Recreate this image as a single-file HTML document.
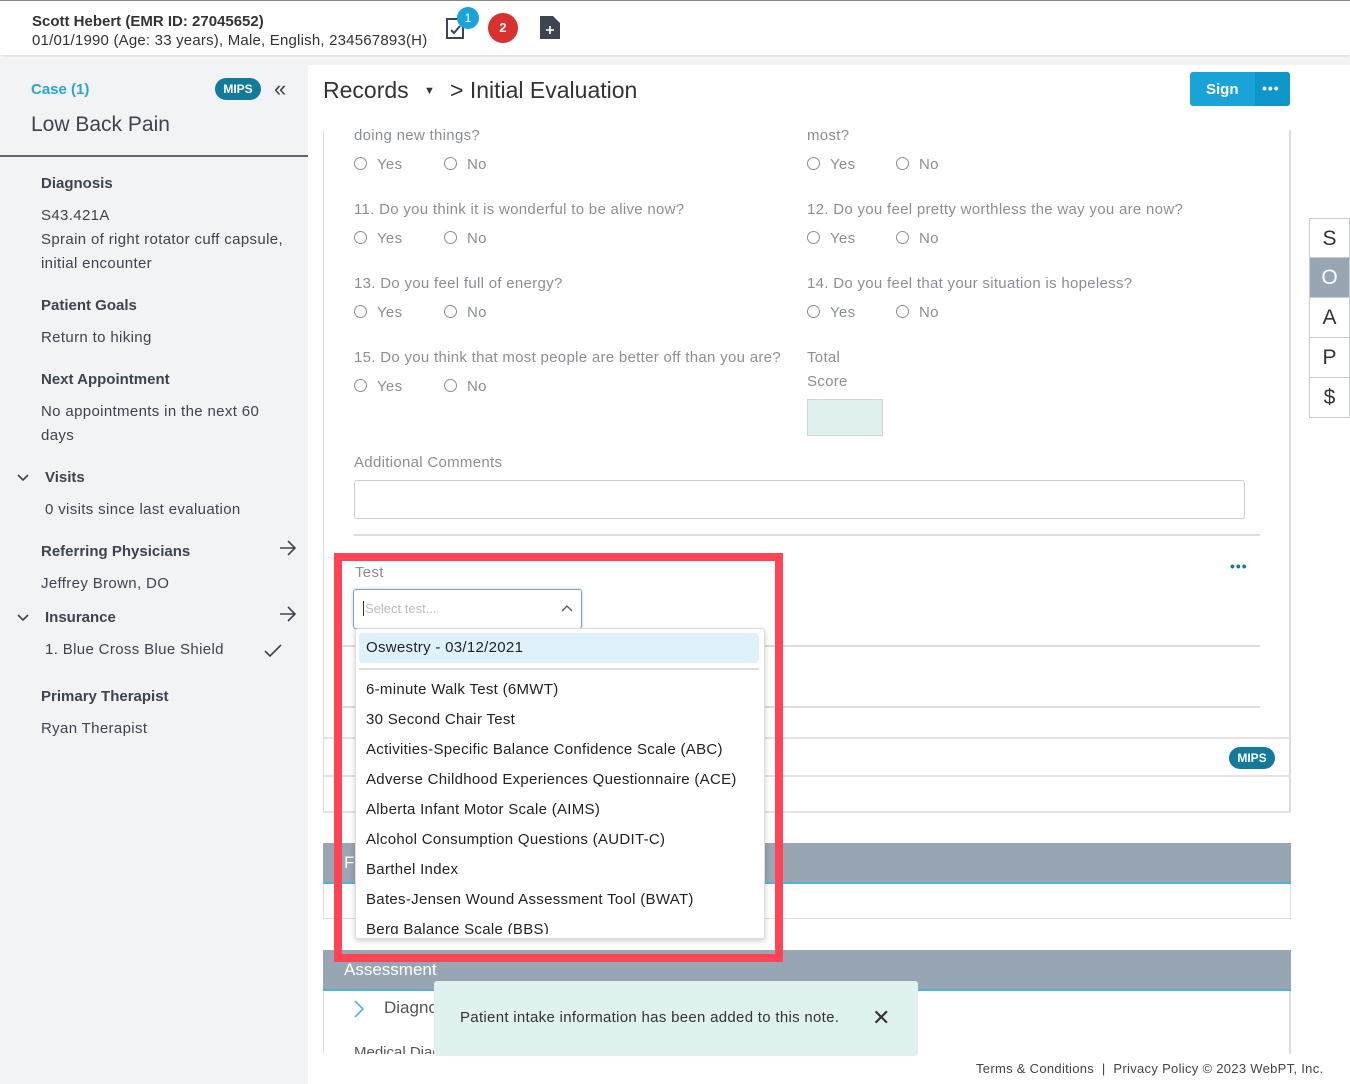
<!DOCTYPE html>
<html><head><meta charset="utf-8"><style>
*{box-sizing:border-box;margin:0;padding:0}
body{width:1350px;height:1084px;position:relative;overflow:hidden;background:#fff;font-family:"Liberation Sans",sans-serif;color:#3d4450}
.a{position:absolute;white-space:nowrap}
.q{color:#8a8f96;font-size:15px;letter-spacing:.3px}
.r{position:absolute;width:13px;height:13px;border:1px solid #8a8f96;border-radius:50%}
.sb{font-size:15px;color:#3d4450;letter-spacing:.35px}
.sh{font-size:15px;font-weight:bold;color:#3d4450}
.it{left:366px;font-size:15px;color:#222;letter-spacing:.3px}
.tab{position:absolute;left:1309px;width:41px;height:40px;border:1px solid #c8ccd0;border-top:none;font-size:21px;text-align:center;line-height:40px;color:#333}
</style></head><body>
<!-- header -->
<div class="a" style="left:0;top:0;width:1350px;height:55px;background:#fff;border-top:1px solid #888;box-shadow:0 2px 4px rgba(0,0,0,.15)"></div>
<div class="a" style="left:32px;top:13px;font-size:15px;font-weight:bold;color:#333">Scott Hebert (EMR ID: 27045652)</div>
<div class="a" style="left:32px;top:32px;font-size:15px;color:#333;letter-spacing:.2px">01/01/1990 (Age: 33 years), Male, English, 234567893(H)</div>
<svg class="a" style="left:444px;top:16px" width="24" height="26" viewBox="0 0 24 26"><path d="M3 3h12l4 4v15H3z" fill="none" stroke="#3d4450" stroke-width="2"/><path d="M7 14l3 3 6-7" fill="none" stroke="#3d4450" stroke-width="2"/></svg>
<div class="a" style="left:457px;top:7px;width:22px;height:22px;border-radius:50%;background:#1aa3d8;color:#fff;font-size:12px;text-align:center;line-height:22px">1</div>
<div class="a" style="left:488px;top:13px;width:30px;height:30px;border-radius:50%;background:#d9312f;color:#fff;font-size:13px;font-weight:bold;text-align:center;line-height:30px">2</div>
<svg class="a" style="left:539px;top:15px" width="22" height="25" viewBox="0 0 22 25"><path d="M1 1h13l7 7v16H1z" fill="#3d4450"/><path d="M11 11v8M7 15h8" stroke="#fff" stroke-width="1.6"/></svg>
<!-- sidebar -->
<div class="a" style="left:0;top:57px;width:308px;height:1027px;background:#f1f3f5"></div>
<div class="a" style="left:0;top:155px;width:308px;height:2px;background:#5d6670"></div>
<div class="a" style="left:31px;top:81px;font-size:15px;color:#2aa3d6;font-weight:bold">Case (1)</div>
<div class="a" style="left:215px;top:78px;width:46px;height:22px;border-radius:11px;background:#137a9a;color:#fff;font-size:12px;font-weight:bold;text-align:center;line-height:22px">MIPS</div>
<div class="a" style="left:274px;top:76px;font-size:22px;color:#3d4450">«</div>
<div class="a" style="left:31px;top:113px;font-size:21px;color:#3d4450">Low Back Pain</div>
<div class="a sh" style="left:41px;top:175px">Diagnosis</div>
<div class="a sb" style="left:41px;top:207px">S43.421A</div>
<div class="a sb" style="left:41px;top:231px">Sprain of right rotator cuff capsule,</div>
<div class="a sb" style="left:41px;top:255px">initial encounter</div>
<div class="a sh" style="left:41px;top:297px">Patient Goals</div>
<div class="a sb" style="left:41px;top:329px">Return to hiking</div>
<div class="a sh" style="left:41px;top:371px">Next Appointment</div>
<div class="a sb" style="left:41px;top:403px">No appointments in the next 60</div>
<div class="a sb" style="left:41px;top:427px">days</div>
<svg class="a" style="left:16px;top:473px" width="14" height="10"><path d="M2 2l5 5 5-5" fill="none" stroke="#3d4450" stroke-width="1.6"/></svg>
<div class="a sh" style="left:45px;top:469px">Visits</div>
<div class="a sb" style="left:45px;top:501px">0 visits since last evaluation</div>
<div class="a sh" style="left:41px;top:543px">Referring Physicians</div>
<svg class="a" style="left:278px;top:539px" width="20" height="18"><path d="M2 9h15M10 2l7 7-7 7" fill="none" stroke="#3d4450" stroke-width="1.6"/></svg>
<div class="a sb" style="left:41px;top:575px">Jeffrey Brown, DO</div>
<svg class="a" style="left:16px;top:613px" width="14" height="10"><path d="M2 2l5 5 5-5" fill="none" stroke="#3d4450" stroke-width="1.6"/></svg>
<div class="a sh" style="left:45px;top:609px">Insurance</div>
<svg class="a" style="left:278px;top:605px" width="20" height="18"><path d="M2 9h15M10 2l7 7-7 7" fill="none" stroke="#3d4450" stroke-width="1.6"/></svg>
<div class="a sb" style="left:45px;top:641px">1. Blue Cross Blue Shield</div>
<svg class="a" style="left:263px;top:643px" width="20" height="16"><path d="M2 8l5 5 11-11" fill="none" stroke="#3d4450" stroke-width="1.6"/></svg>
<div class="a sh" style="left:41px;top:688px">Primary Therapist</div>
<div class="a sb" style="left:41px;top:720px">Ryan Therapist</div>
<!-- main top -->
<div class="a" style="left:308px;top:57px;width:1042px;height:8px;background:#f1f3f5"></div>
<div class="a" style="left:323px;top:77px;font-size:23px;color:#333">Records</div>
<div class="a" style="left:424px;top:85px;font-size:11px;color:#333">▼</div>
<div class="a" style="left:450px;top:77px;font-size:23px;color:#333">&gt; Initial Evaluation</div>
<div class="a" style="left:1190px;top:72px;width:100px;height:34px;border-radius:3px;background:#1aa3d8"></div>
<div class="a" style="left:1255px;top:72px;width:35px;height:34px;border-radius:0 3px 3px 0;background:#0f96c9"></div>
<div class="a" style="left:1206px;top:81px;font-size:15px;font-weight:bold;color:#fff">Sign</div>
<div class="a" style="left:1262px;top:80px;font-size:14px;font-weight:bold;color:#fff;letter-spacing:1px">•••</div>
<!-- card -->
<div class="a" style="left:323px;top:130px;width:968px;height:683px;border-left:1px solid #ddd;border-right:2px solid #ddd"></div>
<div class="a q" style="left:354px;top:127px">doing new things?</div>
<div class="a q" style="left:807px;top:127px">most?</div>
<div class="r" style="left:354px;top:157px"></div><div class="a q" style="left:377px;top:156px">Yes</div>
<div class="r" style="left:444px;top:157px"></div><div class="a q" style="left:467px;top:156px">No</div>
<div class="r" style="left:807px;top:157px"></div><div class="a q" style="left:830px;top:156px">Yes</div>
<div class="r" style="left:896px;top:157px"></div><div class="a q" style="left:919px;top:156px">No</div>
<div class="a q" style="left:354px;top:201px">11. Do you think it is wonderful to be alive now?</div>
<div class="a q" style="left:807px;top:201px">12. Do you feel pretty worthless the way you are now?</div>
<div class="r" style="left:354px;top:231px"></div><div class="a q" style="left:377px;top:230px">Yes</div>
<div class="r" style="left:444px;top:231px"></div><div class="a q" style="left:467px;top:230px">No</div>
<div class="r" style="left:807px;top:231px"></div><div class="a q" style="left:830px;top:230px">Yes</div>
<div class="r" style="left:896px;top:231px"></div><div class="a q" style="left:919px;top:230px">No</div>
<div class="a q" style="left:354px;top:275px">13. Do you feel full of energy?</div>
<div class="a q" style="left:807px;top:275px">14. Do you feel that your situation is hopeless?</div>
<div class="r" style="left:354px;top:305px"></div><div class="a q" style="left:377px;top:304px">Yes</div>
<div class="r" style="left:444px;top:305px"></div><div class="a q" style="left:467px;top:304px">No</div>
<div class="r" style="left:807px;top:305px"></div><div class="a q" style="left:830px;top:304px">Yes</div>
<div class="r" style="left:896px;top:305px"></div><div class="a q" style="left:919px;top:304px">No</div>
<div class="a q" style="left:354px;top:349px">15. Do you think that most people are better off than you are?</div>
<div class="a q" style="left:807px;top:349px">Total</div>
<div class="a q" style="left:807px;top:373px">Score</div>
<div class="r" style="left:354px;top:379px"></div><div class="a q" style="left:377px;top:378px">Yes</div>
<div class="r" style="left:444px;top:379px"></div><div class="a q" style="left:467px;top:378px">No</div>
<div class="a" style="left:807px;top:399px;width:76px;height:37px;background:#dff0ef;border:1px solid #cfd6d6"></div>
<div class="a q" style="left:354px;top:454px">Additional Comments</div>
<div class="a" style="left:354px;top:480px;width:891px;height:39px;border:1px solid #ccc;border-radius:3px"></div>
<div class="a" style="left:354px;top:534px;width:906px;height:2px;background:#ddd"></div>
<div class="a" style="left:1230px;top:558px;font-size:14px;color:#137a9a;font-weight:bold;letter-spacing:1px">•••</div>
<div class="a" style="left:342px;top:645px;width:918px;height:2px;background:#ddd"></div>
<div class="a" style="left:342px;top:706px;width:918px;height:2px;background:#ddd"></div>
<div class="a" style="left:323px;top:737px;width:968px;height:2px;background:#e3e3e3"></div>
<div class="a" style="left:323px;top:775px;width:968px;height:2px;background:#e3e3e3"></div>
<div class="a" style="left:323px;top:811px;width:968px;height:2px;background:#e3e3e3"></div>
<div class="a" style="left:1229px;top:747px;width:46px;height:22px;border-radius:11px;background:#137a9a;color:#fff;font-size:12px;font-weight:bold;text-align:center;line-height:22px">MIPS</div>
<!-- section bars -->
<div class="a" style="left:323px;top:843px;width:968px;height:41px;background:#97a6b2;border-bottom:2px solid #4fb3d6"></div>
<div class="a" style="left:344px;top:853px;font-size:17px;color:#fff">F</div>
<div class="a" style="left:323px;top:884px;width:968px;height:35px;border:1px solid #ddd;border-top:none"></div>
<div class="a" style="left:323px;top:950px;width:968px;height:41px;background:#97a6b2;border-bottom:2px solid #4fb3d6"></div>
<div class="a" style="left:344px;top:960px;font-size:17px;color:#fff">Assessment</div>
<div class="a" style="left:323px;top:991px;width:968px;height:63px;border-left:1px solid #ddd;border-right:2px solid #ddd"></div>
<svg class="a" style="left:352px;top:999px" width="14" height="20"><path d="M3 2l8 8-8 8" fill="none" stroke="#4fb3d6" stroke-width="1.6"/></svg>
<div class="a" style="left:384px;top:998px;font-size:17px;color:#555">Diagnosis</div>
<div class="a" style="left:354px;top:1044px;font-size:15px;color:#555">Medical Diagnosis</div>
<div class="a" style="left:308px;top:1054px;width:1042px;height:30px;background:#fff"></div>
<!-- red box + dropdown -->
<div class="a" style="left:342px;top:561px;width:433px;height:70px;background:#fff"></div>
<div class="a" style="left:334px;top:553px;width:449px;height:409px;border:8px solid #ff4455"></div>
<div class="a q" style="left:355px;top:564px">Test</div>
<div class="a" style="left:353px;top:589px;width:229px;height:40px;border:1px solid #7fa3b8;border-radius:3px;box-shadow:0 0 3px rgba(80,140,180,.4)"></div>
<div class="a" style="left:363px;top:601px;font-size:13px;color:#bbb;border-left:1px solid #333;padding-left:1px">Select test...</div>
<svg class="a" style="left:560px;top:603px" width="14" height="10"><path d="M2 8l5-5 5 5" fill="none" stroke="#555" stroke-width="1.3"/></svg>
<div class="a" style="left:355px;top:628px;width:410px;height:311px;background:#fff;border:1px solid #ddd;border-radius:3px;box-shadow:0 2px 6px rgba(0,0,0,.2)"></div>
<div class="a" style="left:359px;top:633px;width:400px;height:30px;background:#dff2fb;border-radius:3px"></div>
<div class="a it" style="top:639px">Oswestry - 03/12/2021</div>
<div class="a" style="left:359px;top:668px;width:400px;height:2px;background:#ddd"></div>
<div class="a it" style="top:681px">6-minute Walk Test (6MWT)</div>
<div class="a it" style="top:711px">30 Second Chair Test</div>
<div class="a it" style="top:741px">Activities-Specific Balance Confidence Scale (ABC)</div>
<div class="a it" style="top:771px">Adverse Childhood Experiences Questionnaire (ACE)</div>
<div class="a it" style="top:801px">Alberta Infant Motor Scale (AIMS)</div>
<div class="a it" style="top:831px">Alcohol Consumption Questions (AUDIT-C)</div>
<div class="a it" style="top:861px">Barthel Index</div>
<div class="a it" style="top:891px">Bates-Jensen Wound Assessment Tool (BWAT)</div>
<div class="a" style="left:356px;top:918px;width:408px;height:16px;overflow:hidden"><div class="a it" style="left:10px;top:3px">Berg Balance Scale (BBS)</div></div>
<!-- SOAP tabs -->
<div class="tab" style="top:218px;border-top:1px solid #c8ccd0">S</div>
<div class="tab" style="top:258px;background:#97a6b2;color:#fff">O</div>
<div class="tab" style="top:298px">A</div>
<div class="tab" style="top:338px">P</div>
<div class="tab" style="top:378px">$</div>
<!-- toast -->
<div class="a" style="left:434px;top:981px;width:484px;height:75px;background:#e0f2ef;border-radius:3px"></div>
<div class="a" style="left:460px;top:1009px;font-size:15px;color:#333;letter-spacing:.3px">Patient intake information has been added to this note.</div>
<div class="a" style="left:872px;top:1005px;font-size:22px;color:#333">✕</div>
<!-- footer -->
<div class="a" style="left:976px;top:1061px;font-size:13px;color:#444;letter-spacing:.3px">Terms &amp; Conditions &nbsp;|&nbsp; Privacy Policy © 2023 WebPT, Inc.</div>
</body></html>
